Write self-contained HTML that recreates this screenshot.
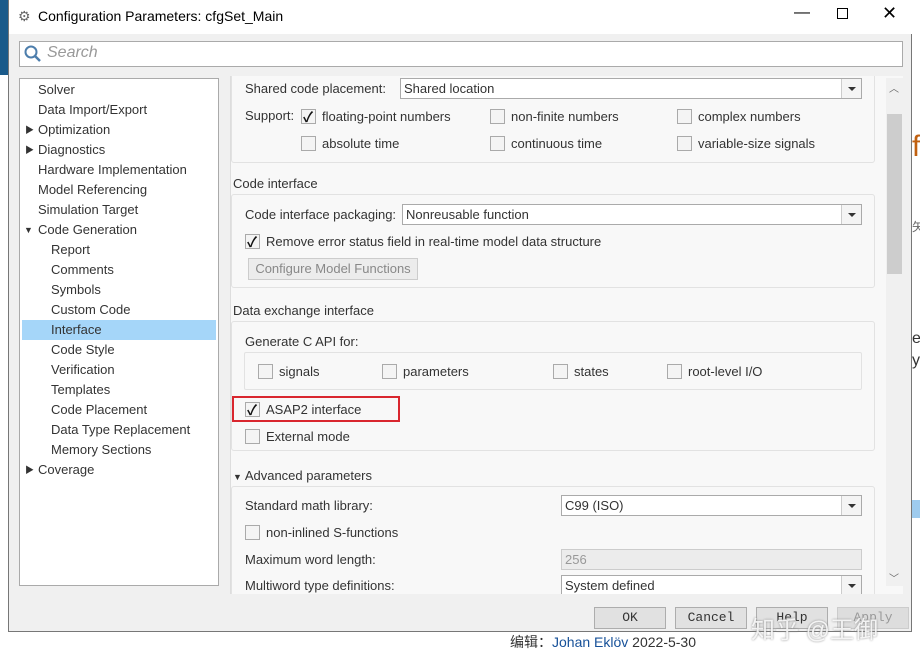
<!DOCTYPE html>
<html><head><meta charset="utf-8"><style>
*{margin:0;padding:0;box-sizing:border-box}
body{width:920px;height:640px;overflow:hidden;background:#fff;font-family:"Liberation Sans","Noto Sans CJK SC",sans-serif;font-size:13px;color:#333;position:relative}
.a{position:absolute;white-space:nowrap}
.dlg{position:absolute;left:8px;top:0;width:904px;height:632px;background:#f0f0f0;border:1px solid #777;border-top:none}
.cb{position:absolute;width:15px;height:15px;border:1px solid #aaa;background:#f4f4f4}
.cb.on::after{content:"✓";position:absolute;left:1px;top:-3px;font-size:14px;color:#111;font-weight:bold}
.sel{position:absolute;height:21px;border:1px solid #aaa;background:#fff;padding:2px 3px;font-size:13px}
.sel .btn{position:absolute;right:0;top:0;width:20px;height:19px;border-left:1px solid #ccc;background:#f4f4f4}
.sel .btn::after{content:"";position:absolute;left:6px;top:8px;border:4px solid transparent;border-top:4px solid #333}
.grp{position:absolute;border:1px solid #e2e2e2;border-radius:3px;background:#f8f8f8}
.tree div{height:20px;line-height:20px}
.bb{position:absolute;top:607px;width:72px;height:22px;border:1px solid #adadad;background:#e1e1e1;font-family:"Liberation Mono",monospace;font-size:13px;text-align:center;line-height:20px}
</style></head><body>
<div class="a" style="left:0;top:0;width:8px;height:75px;background:#1a5a8a"></div>
<div class="a" style="left:912px;top:0;width:8px;height:640px;background:#fff"></div>
<div class="a" style="left:912px;top:130px;font-size:30px;color:#c06010">f</div>
<div class="a" style="left:912px;top:218px;font-size:12px;color:#666">矢</div>
<div class="a" style="left:912px;top:330px;font-size:16px;color:#333">e</div>
<div class="a" style="left:912px;top:352px;font-size:16px;color:#333">y</div>
<div class="a" style="left:912px;top:500px;width:8px;height:18px;background:#9ecbee"></div>
<div class="a" style="left:510px;top:632px;font-size:14px;color:#333">编辑：<span style="color:#175199">Johan Eklöv</span> 2022-5-30</div>
<div class="dlg">
 <div class="a" style="left:0;top:0;width:903px;height:34px;background:#fff"></div>
 <div class="a" style="left:9px;top:8px;font-size:14px;color:#666">⚙</div>
 <div class="a" style="left:29px;top:8px;font-size:14px;color:#000">Configuration Parameters: cfgSet_Main</div>
 <div class="a" style="left:785px;top:4px;font-size:16px;color:#000">—</div>
 <div class="a" style="left:828px;top:8px;width:11px;height:11px;border:1px solid #000"></div>
 <div class="a" style="left:873px;top:3px;font-size:18px;color:#000">✕</div>
 <div class="a" style="left:10px;top:41px;width:884px;height:26px;border:1px solid #aaa;background:#fff"></div>
 <svg class="a" style="left:14px;top:44px" width="20" height="20"><circle cx="8" cy="8" r="5.5" fill="none" stroke="#4d7eac" stroke-width="2"/><path d="M12 12l5 5" stroke="#4d7eac" stroke-width="2.5"/></svg>
 <div class="a" style="left:38px;top:44px;font-size:16px;color:#999;font-style:italic">Search</div>
 <div class="a tree" style="left:10px;top:78px;width:200px;height:508px;border:1px solid #aaa;background:#fff;padding-top:1px">
  <div style="padding-left:18px">Solver</div>
  <div style="padding-left:18px">Data Import/Export</div>
  <div style="padding-left:18px;position:relative"><span class="a" style="left:5px;font-size:9px">▶</span>Optimization</div>
  <div style="padding-left:18px;position:relative"><span class="a" style="left:5px;font-size:9px">▶</span>Diagnostics</div>
  <div style="padding-left:18px">Hardware Implementation</div>
  <div style="padding-left:18px">Model Referencing</div>
  <div style="padding-left:18px">Simulation Target</div>
  <div style="padding-left:18px;position:relative"><span class="a" style="left:4px;font-size:9px">▼</span>Code Generation</div>
  <div style="padding-left:31px">Report</div>
  <div style="padding-left:31px">Comments</div>
  <div style="padding-left:31px">Symbols</div>
  <div style="padding-left:31px">Custom Code</div>
  <div style="padding-left:31px;background:#a5d6f9;margin:0 2px;padding-left:29px">Interface</div>
  <div style="padding-left:31px">Code Style</div>
  <div style="padding-left:31px">Verification</div>
  <div style="padding-left:31px">Templates</div>
  <div style="padding-left:31px">Code Placement</div>
  <div style="padding-left:31px">Data Type Replacement</div>
  <div style="padding-left:31px">Memory Sections</div>
  <div style="padding-left:18px;position:relative"><span class="a" style="left:5px;font-size:9px">▶</span>Coverage</div>
 </div>
 <div class="a" style="left:221px;top:76px;width:673px;height:518px;background:#f8f8f8;border-left:1px solid #ddd;overflow:hidden">
  <div class="grp" style="left:0;top:-5px;width:644px;height:92px"></div>
  <div class="a" style="left:14px;top:5px">Shared code placement:</div>
  <div class="sel" style="left:169px;top:2px;width:462px">Shared location<div class="btn"></div></div>
  <div class="a" style="left:14px;top:32px">Support:</div>
  <div class="cb on" style="left:70px;top:33px"></div><div class="a" style="left:91px;top:33px">floating-point numbers</div>
  <div class="cb" style="left:259px;top:33px"></div><div class="a" style="left:280px;top:33px">non-finite numbers</div>
  <div class="cb" style="left:446px;top:33px"></div><div class="a" style="left:467px;top:33px">complex numbers</div>
  <div class="cb" style="left:70px;top:60px"></div><div class="a" style="left:91px;top:60px">absolute time</div>
  <div class="cb" style="left:259px;top:60px"></div><div class="a" style="left:280px;top:60px">continuous time</div>
  <div class="cb" style="left:446px;top:60px"></div><div class="a" style="left:467px;top:60px">variable-size signals</div>
  <div class="a" style="left:2px;top:100px">Code interface</div>
  <div class="grp" style="left:0;top:118px;width:644px;height:94px"></div>
  <div class="a" style="left:14px;top:131px">Code interface packaging:</div>
  <div class="sel" style="left:171px;top:128px;width:460px">Nonreusable function<div class="btn"></div></div>
  <div class="cb on" style="left:14px;top:158px"></div><div class="a" style="left:35px;top:158px">Remove error status field in real-time model data structure</div>
  <div class="a" style="left:17px;top:182px;width:170px;height:22px;border:1px solid #ccc;background:#ececec;color:#888;text-align:center;line-height:20px">Configure Model Functions</div>
  <div class="a" style="left:2px;top:227px">Data exchange interface</div>
  <div class="grp" style="left:0;top:245px;width:644px;height:130px"></div>
  <div class="a" style="left:14px;top:258px">Generate C API for:</div>
  <div class="a" style="left:13px;top:276px;width:618px;height:38px;border:1px solid #e2e2e2;border-radius:2px"></div>
  <div class="cb" style="left:27px;top:288px"></div><div class="a" style="left:48px;top:288px">signals</div>
  <div class="cb" style="left:151px;top:288px"></div><div class="a" style="left:172px;top:288px">parameters</div>
  <div class="cb" style="left:322px;top:288px"></div><div class="a" style="left:343px;top:288px">states</div>
  <div class="cb" style="left:436px;top:288px"></div><div class="a" style="left:457px;top:288px">root-level I/O</div>
  <div class="a" style="left:1px;top:320px;width:168px;height:26px;border:2px solid #d9262e"></div>
  <div class="cb on" style="left:14px;top:326px"></div><div class="a" style="left:35px;top:326px">ASAP2 interface</div>
  <div class="cb" style="left:14px;top:353px"></div><div class="a" style="left:35px;top:353px">External mode</div>
  <div class="a" style="left:2px;top:392px"><span style="font-size:9px">▼</span> Advanced parameters</div>
  <div class="grp" style="left:0;top:410px;width:644px;height:120px"></div>
  <div class="a" style="left:14px;top:422px">Standard math library:</div>
  <div class="sel" style="left:330px;top:419px;width:301px">C99 (ISO)<div class="btn"></div></div>
  <div class="cb" style="left:14px;top:449px"></div><div class="a" style="left:35px;top:449px">non-inlined S-functions</div>
  <div class="a" style="left:14px;top:476px">Maximum word length:</div>
  <div class="a" style="left:330px;top:473px;width:301px;height:21px;border:1px solid #ccc;background:#ececec;color:#999;padding:2px 3px">256</div>
  <div class="a" style="left:14px;top:502px">Multiword type definitions:</div>
  <div class="sel" style="left:330px;top:499px;width:301px">System defined<div class="btn"></div></div>
 </div>
 <div class="a" style="left:877px;top:78px;width:17px;height:508px;background:#f0f0f0"></div>
 <div class="a" style="left:880px;top:80px;font-size:10px;color:#666">︿</div>
 <div class="a" style="left:878px;top:114px;width:15px;height:160px;background:#cdcdcd"></div>
 <div class="a" style="left:880px;top:570px;font-size:10px;color:#666">﹀</div>
 <div class="bb" style="left:585px">OK</div>
 <div class="bb" style="left:666px">Cancel</div>
 <div class="bb" style="left:747px">Help</div>
 <div class="bb" style="left:828px;color:#999;background:#ddd;border-color:#ccc">Apply</div>
 <div class="a" style="left:742px;top:610px;font-size:24px;color:rgba(255,255,255,.85);text-shadow:0 0 2px #888">知乎 @王御</div>
</div>
</body></html>
